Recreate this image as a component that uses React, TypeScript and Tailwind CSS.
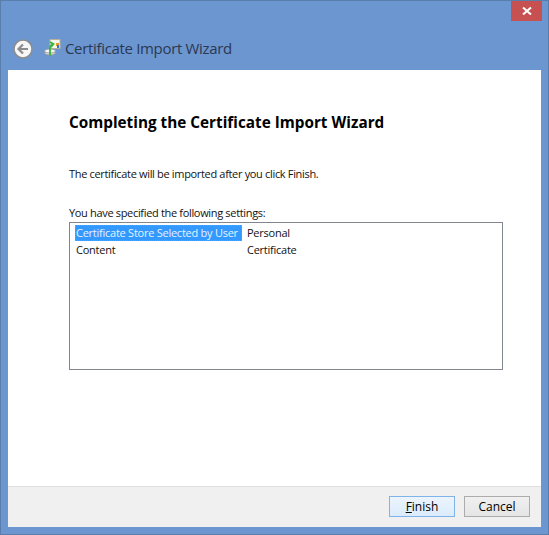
const uiFont = "font-['Open_Sans','Noto_Sans',sans-serif]";

const BackIcon = () => (
  <svg width="20" height="20" viewBox="0 0 20 20">
    <circle cx="10" cy="10" r="9" fill="#f7f7f7" stroke="#8d8d8d" strokeWidth="1.5" />
    <path d="M15 10H6M10 5.5L5.5 10l4.5 4.5" fill="none" stroke="#8c8c8c" strokeWidth="2.2" />
  </svg>
);

const WizardIcon = () => (
  <svg width="17" height="17" viewBox="0 0 17 17">
    <rect x="6" y="0.5" width="10" height="9" fill="#f8f5ea" stroke="#b9b19a" strokeWidth="1" />
    <rect x="12" y="4" width="3" height="3" fill="#e39a2b" />
    <rect x="13" y="6" width="2" height="3" fill="#3f6fc0" />
    <ellipse cx="6" cy="14" rx="5.5" ry="2" fill="#d8d8d8" stroke="#8f8f8f" strokeWidth="0.7" />
    <ellipse cx="6" cy="12" rx="5.5" ry="2" fill="#f4f4f4" stroke="#8f8f8f" strokeWidth="0.7" />
    <path d="M6 16.5V10C6 7 7 6 9 5M6 3L9.5 5 7 8" fill="none" stroke="#35b53a" strokeWidth="1.8" />
  </svg>
);

const CloseIcon = () => (
  <svg width="10" height="8" viewBox="0 0 10 8">
    <path d="M1 0.5L9 7.5M9 0.5L1 7.5" stroke="#fff" strokeWidth="2" />
  </svg>
);

export default function App() {
  return (
    <div className={`w-[549px] h-[535px] flex flex-col border border-[#5a7eab] bg-[#6b96d0] ${uiFont}`}>
      {/* title bar */}
      <div className="h-[20px] flex justify-end pr-[6px]">
        <div className="w-[31px] h-[20px] bg-[#c75050] flex items-center justify-center">
          <CloseIcon />
        </div>
      </div>
      <div className="h-[49px] flex items-center pl-[12px] pt-[7px]">
        <BackIcon />
        <div className="ml-[11px] mb-[4px]">
          <WizardIcon />
        </div>
        <span className="ml-[4px] mb-[2px] text-[15px] tracking-[-0.33px] text-[#2b3850]">Certificate Import Wizard</span>
      </div>

      {/* white page */}
      <div className="mx-[7px] flex-1 flex flex-col bg-white">
        <div className="flex-1 pl-[61px] pr-[38px] pt-[41px] text-[#111]">
          <h1 className="text-[15.3px] leading-[22px] font-bold text-black">Completing the Certificate Import Wizard</h1>
          <p className="mt-[33px] text-[11px] tracking-[-0.33px] leading-[16px]">The certificate will be imported after you click Finish.</p>
          <p className="mt-[23px] text-[11px] tracking-[-0.33px] leading-[16px]">You have specified the following settings:</p>
          <div className="mt-[1px] h-[148px] border border-[#82878f] pl-[5px] pt-[2px] text-[11px] tracking-[-0.25px]">
            <div className="flex h-[16px] items-center">
              <span className="w-[167px] h-[16px] leading-[14px] bg-[#3399ff] text-[#e4f1ff] border border-dotted border-[#e8861a] whitespace-nowrap">
                Certificate Store Selected by User
              </span>
              <span className="ml-[5px]">Personal</span>
            </div>
            <div className="flex h-[16px] items-center mt-[1px]">
              <span className="w-[167px] pl-[1px]">Content</span>
              <span className="ml-[5px]">Certificate</span>
            </div>
          </div>
        </div>

        {/* footer buttons */}
        <div className="h-[41px] border-t border-[#dfdfdf] bg-[#f0f0f0] flex justify-end items-start gap-[9px] pt-[9px] pr-[11px] text-[12px] text-black">
          <button className="w-[66px] h-[21px] leading-[18px] border border-[#7eb4ea] bg-gradient-to-b from-[#ecf4fc] to-[#dcecfc]">
            <span className="underline">F</span>inish
          </button>
          <button className="w-[66px] h-[21px] leading-[18px] border border-[#acacac] bg-gradient-to-b from-[#f0f0f0] to-[#e5e5e5]">
            Cancel
          </button>
        </div>
      </div>
      <div className="h-[7px]" />
    </div>
  );
}
